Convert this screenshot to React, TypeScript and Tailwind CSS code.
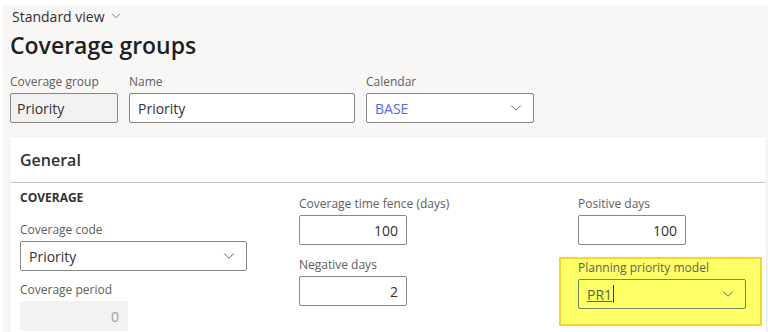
import { ChevronDown } from 'lucide-react';

const font = { fontFamily: '"Open Sans", "Noto Sans", sans-serif' };

function Label({ children }: { children: React.ReactNode }) {
  return <div className="text-[12px] leading-[16px] font-medium text-[#605e5c] mb-[3px] whitespace-nowrap">{children}</div>;
}

function TextBox({ value, width, disabled, align = 'left' }: { value: string; width: string; disabled?: boolean; align?: 'left' | 'right' }) {
  return (
    <div
      className={`${width} h-[30px] flex items-center px-[8px] text-[14px] rounded-[2px] ${
        disabled ? 'bg-[#f3f2f1] border border-[#f3f2f1] text-[#a19f9d]' : 'bg-white border border-[#8a8886] text-[#323130]'
      } ${align === 'right' ? 'justify-end' : ''}`}
    >
      {value}
    </div>
  );
}

function Select({ value, width, valueClass = 'text-[#323130]', border = 'border-[#8a8886]', bg = 'bg-white' }: { value: React.ReactNode; width: string; valueClass?: string; border?: string; bg?: string }) {
  return (
    <div className={`${width} h-[30px] flex items-center justify-between pl-[8px] pr-[8px] text-[14px] rounded-[2px] border ${border} ${bg}`}>
      <span className={valueClass}>{value}</span>
      <ChevronDown className="w-[18px] h-[18px] text-[#605e5c]" strokeWidth={1.3} />
    </div>
  );
}

export default function App() {
  return (
    <div className="w-[768px] h-[332px] bg-white overflow-hidden" style={font}>
      <div className="mt-[5px] ml-[2px] h-[327px] bg-[#f8f7f6] pl-[8px] pr-0">
        <div className="flex items-center gap-[4px] pt-[2px] pl-[2px] h-[20px] text-[14px] text-[#323130]">
          Standard view
          <ChevronDown className="w-[14px] h-[14px] text-[#605e5c]" strokeWidth={1.3} />
        </div>
        <h1 className="mt-[5px] text-[23px] leading-[30px] font-semibold text-[#201f1e]">Coverage groups</h1>

        <div className="flex gap-[11px] mt-[14px]">
          <div>
            <Label>Coverage group</Label>
            <div className="w-[108px] h-[30px] flex items-center px-[6px] text-[14px] text-[#323130] bg-[#f3f2f1] border border-[#8a8886] rounded-[2px]">Priority</div>
          </div>
          <div>
            <Label>Name</Label>
            <TextBox value="Priority" width="w-[226px]" />
          </div>
          <div>
            <Label>Calendar</Label>
            <Select value="BASE" width="w-[168px]" valueClass="text-[#4f6bed]" />
          </div>
        </div>

        <div className="mt-[14px] bg-white rounded-[2px] shadow-[0_0_2px_rgba(0,0,0,0.12)] h-[200px] mr-[2px]">
          <div className="h-[46px] flex items-center pl-[10px] border-b border-[#c8c6c4] text-[16px] font-semibold text-[#323130]">General</div>
          <div className="flex pl-[10px]">
            <div className="w-[279px] pt-[7px]">
              <div className="text-[12px] leading-[16px] font-bold text-[#323130]">COVERAGE</div>
              <div className="mt-[16px]">
                <Label>Coverage code</Label>
                <Select value="Priority" width="w-[227px]" />
              </div>
              <div className="mt-[11px]">
                <Label>Coverage period</Label>
                <TextBox value="0" width="w-[108px]" disabled align="right" />
              </div>
            </div>
            <div className="w-[279px] pt-[13px]">
              <Label>Coverage time fence (days)</Label>
              <TextBox value="100" width="w-[108px]" align="right" />
              <div className="mt-[12px]">
                <Label>Negative days</Label>
                <TextBox value="2" width="w-[108px]" align="right" />
              </div>
            </div>
            <div className="pt-[13px]">
              <Label>Positive days</Label>
              <TextBox value="100" width="w-[108px]" align="right" />
              <div className="mt-[12px] -ml-[19px] w-[203px] h-[69px] bg-[#ffff66] border-2 border-[#ffd324] pl-[17px] pt-[1px]">
                <Label>Planning priority model</Label>
                <Select
                  value={
                    <span className="flex items-center">
                      <span className="underline">PR1</span>
                      <span className="inline-block w-px h-[18px] bg-[#323130] ml-px" />
                    </span>
                  }
                  width="w-[168px]"
                  valueClass="text-[#4c6a3a]"
                  border="border-[#6a8a5e]"
                  bg="bg-transparent"
                />
              </div>
            </div>
          </div>
        </div>
      </div>
    </div>
  );
}
